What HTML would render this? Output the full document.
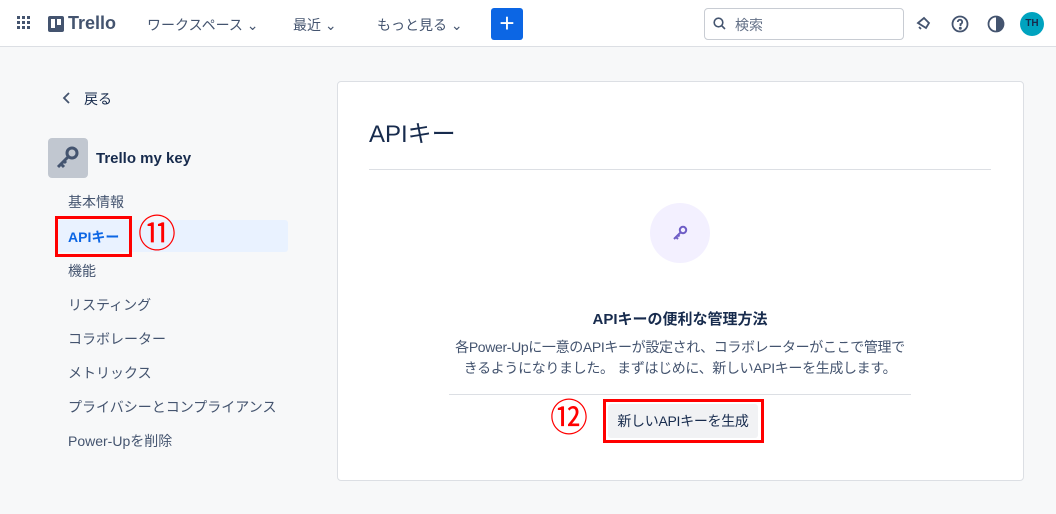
<!DOCTYPE html>
<html><head><meta charset="utf-8"><style>
*{margin:0;padding:0;box-sizing:border-box}
body{width:1056px;height:514px;overflow:hidden;background:#f7f8f9;font-family:"Liberation Sans","Noto Sans CJK JP",sans-serif;color:#172b4d;position:relative}
.a{position:absolute;white-space:nowrap}
.hdr{position:absolute;left:0;top:0;width:1056px;height:47px;background:#fff;border-bottom:1px solid #dcdfe4}
.nav{font-size:14px;color:#44546f}
.side{font-size:14px;color:#44546f}
</style></head><body>
<div class="hdr">
<svg class="a" style="left:17px;top:16px" width="14" height="14" viewBox="0 0 14 14" fill="#44546f"><rect x="0" y="0" width="3" height="3"/><rect x="5" y="0" width="3" height="3"/><rect x="10" y="0" width="3" height="3"/><rect x="0" y="5" width="3" height="3"/><rect x="5" y="5" width="3" height="3"/><rect x="10" y="5" width="3" height="3"/><rect x="0" y="10" width="3" height="3"/><rect x="5" y="10" width="3" height="3"/><rect x="10" y="10" width="3" height="3"/></svg>
<svg class="a" style="left:48px;top:16px" width="16" height="16" viewBox="0 0 16 16"><rect width="16" height="16" rx="2" fill="#44546f"/><rect x="3" y="3" width="4" height="9" fill="#fff"/><rect x="9" y="3" width="4" height="6" fill="#fff"/></svg>
<div class="a" style="left:68px;top:13px;font-size:18px;font-weight:bold;color:#44546f">Trello</div>
<div class="a nav" style="left:147px;top:15px">ワークスペース ⌄</div>
<div class="a nav" style="left:293px;top:15px">最近 ⌄</div>
<div class="a nav" style="left:377px;top:15px">もっと見る ⌄</div>
<div class="a" style="left:491px;top:8px;width:32px;height:32px;background:#0c66e4;border-radius:3px;color:#fff;font-size:26px;line-height:30px;text-align:center">+</div>
<div class="a" style="left:704px;top:8px;width:200px;height:32px;border:1px solid #c8ccd3;border-radius:4px"></div>
<svg class="a" style="left:713px;top:17px" width="13" height="13" viewBox="0 0 13 13" fill="none" stroke="#44546f" stroke-width="1.6"><circle cx="5.5" cy="5.5" r="4.3"/><path d="M8.7 8.7L12 12"/></svg>
<div class="a" style="left:735px;top:15px;font-size:14px;color:#626f86">検索</div>
<svg class="a" style="left:915px;top:15px" width="18" height="18" viewBox="0 0 18 18" fill="none" stroke="#44546f" stroke-width="1.8"><path d="M3 8l6-5 5 5-3 5zM4 12l2 2"/></svg>
<svg class="a" style="left:951px;top:15px" width="18" height="18" viewBox="0 0 18 18" fill="none" stroke="#44546f" stroke-width="1.8"><circle cx="9" cy="9" r="7.5"/><path d="M6.8 7a2.2 2.2 0 1 1 2.7 2.1V11"/><circle cx="9.3" cy="13.3" r=".6" fill="#44546f"/></svg>
<svg class="a" style="left:987px;top:15px" width="18" height="18" viewBox="0 0 18 18"><circle cx="9" cy="9" r="7.5" fill="none" stroke="#44546f" stroke-width="1.8"/><path d="M9 1.5a7.5 7.5 0 0 1 0 15z" fill="#44546f"/></svg>
<div class="a" style="left:1020px;top:12px;width:24px;height:24px;border-radius:50%;background:#00a3bf;color:#172b4d;font-size:10px;font-weight:bold;line-height:24px;text-align:center">TH</div>
</div>

<svg class="a" style="left:61px;top:91px" width="10" height="14" viewBox="0 0 10 14" fill="none" stroke="#44546f" stroke-width="1.8"><path d="M8 2L3 7l5 5"/></svg>
<div class="a side" style="left:84px;top:89px;color:#172b4d">戻る</div>
<div class="a" style="left:48px;top:138px;width:40px;height:40px;background:#c1c7d0;border-radius:4px"></div>
<svg class="a" style="left:55px;top:145px" width="26" height="26" viewBox="0 0 26 26" fill="none" stroke="#44546f" stroke-width="3"><circle cx="17" cy="8" r="5"/><path d="M13.5 11.5L3 22M6 19l3 3M9 16l2 2"/></svg>
<div class="a" style="left:96px;top:150px;font-size:15px;font-weight:bold;color:#172b4d">Trello my key</div>
<div class="a" style="left:55px;top:220px;width:233px;height:32px;background:#e9f2ff;border-radius:3px"></div>
<div class="a side" style="left:68px;top:192px">基本情報</div>
<div class="a" style="left:68px;top:227px;font-size:14px;font-weight:bold;color:#0c66e4">APIキー</div>
<div class="a side" style="left:68px;top:261px">機能</div>
<div class="a side" style="left:68px;top:295px">リスティング</div>
<div class="a side" style="left:68px;top:329px">コラボレーター</div>
<div class="a side" style="left:68px;top:363px">メトリックス</div>
<div class="a side" style="left:68px;top:397px">プライバシーとコンプライアンス</div>
<div class="a side" style="left:68px;top:431px">Power-Upを削除</div>
<div class="a" style="left:55px;top:216px;width:77px;height:41px;border:3px solid #f00"></div>
<div class="a" style="left:138px;top:212px;font-size:38px;color:#f00;line-height:46px">⑪</div>

<div class="a" style="left:337px;top:81px;width:687px;height:400px;background:#fff;border:1px solid #dcdfe4;border-radius:4px"></div>
<div class="a" style="left:369px;top:114px;font-size:24px;color:#172b4d">APIキー</div>
<div class="a" style="left:369px;top:169px;width:622px;height:1px;background:#dcdfe4"></div>
<div class="a" style="left:650px;top:203px;width:60px;height:60px;border-radius:50%;background:#f3f0ff"></div>
<svg class="a" style="left:671px;top:224px" width="18" height="18" viewBox="0 0 18 18" fill="none" stroke="#6e5dc6" stroke-width="2"><circle cx="12" cy="6" r="3.2"/><path d="M9.8 8.2L3 15M5 13l2 2M7 11l1.5 1.5"/></svg>
<div class="a" style="left:449px;top:308px;width:462px;text-align:center;font-size:15px;font-weight:bold;color:#172b4d">APIキーの便利な管理方法</div>
<div class="a" style="left:449px;top:337px;width:462px;text-align:center;font-size:14px;line-height:21px;color:#44546f;letter-spacing:-0.35px">各Power-Upに一意のAPIキーが設定され、コラボレーターがここで管理で<br>きるようになりました。 まずはじめに、新しいAPIキーを生成します。</div>
<div class="a" style="left:449px;top:394px;width:462px;height:1px;background:#dcdfe4"></div>
<div class="a" style="left:608px;top:404px;width:150px;height:34px;background:#f1f2f4;border-radius:3px;font-size:14px;line-height:34px;text-align:center;color:#172b4d;letter-spacing:-0.3px">新しいAPIキーを生成</div>
<div class="a" style="left:603px;top:399px;width:161px;height:44px;border:3px solid #f00"></div>
<div class="a" style="left:550px;top:396px;font-size:38px;color:#f00;line-height:46px">⑫</div>
</body></html>
